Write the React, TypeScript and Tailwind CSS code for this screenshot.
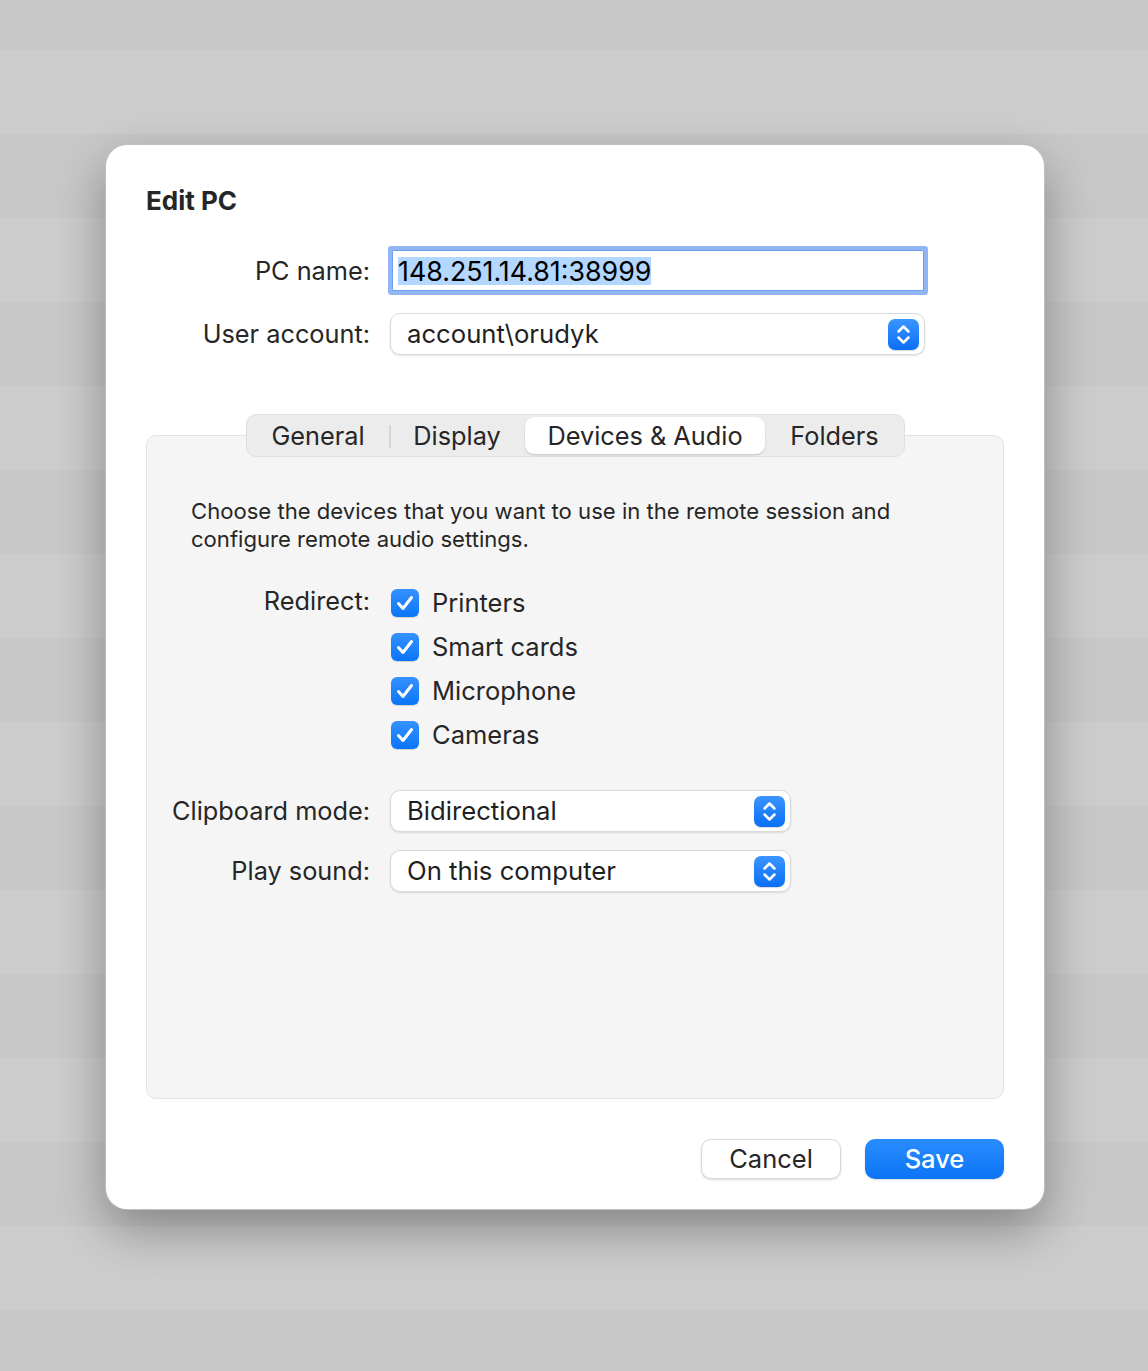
import type { ReactNode } from 'react'

function Stepper() {
  return (
    <div className="flex h-[31px] w-[31px] shrink-0 items-center justify-center rounded-[7px] bg-[linear-gradient(180deg,#3a95ff,#0a6ff5)] shadow-[0_1px_1px_rgba(0,0,0,0.15)]">
      <svg width="31" height="31" viewBox="0 0 31 31" fill="none">
        <path d="M10.5 12.5 L15.5 7.5 L20.5 12.5" stroke="white" strokeWidth="2.5" strokeLinecap="round" strokeLinejoin="round" />
        <path d="M10.5 18.5 L15.5 23.5 L20.5 18.5" stroke="white" strokeWidth="2.5" strokeLinecap="round" strokeLinejoin="round" />
      </svg>
    </div>
  )
}

function Popup({ value, width }: { value: string; width: string }) {
  return (
    <div
      className={`flex h-[42px] items-center justify-between rounded-[10px] border border-[#dadada] bg-white pl-[16px] pr-[5px] shadow-[0_1px_2px_rgba(0,0,0,0.12)] ${width}`}
    >
      <span className="text-[25.7px] leading-none text-[#1f1f1f]">{value}</span>
      <Stepper />
    </div>
  )
}

function Checkbox({ label }: { label: string }) {
  return (
    <div className="flex h-[44px] items-center gap-[13px]">
      <div className="flex h-[28px] w-[28px] items-center justify-center rounded-[6px] bg-[linear-gradient(180deg,#3592ff,#0a74f7)] shadow-[0_1px_1px_rgba(0,0,0,0.15)]">
        <svg width="28" height="28" viewBox="0 0 28 28" fill="none">
          <path d="M7.5 14.5 L12 19.5 L20.5 8.5" stroke="white" strokeWidth="3" strokeLinecap="round" strokeLinejoin="round" />
        </svg>
      </div>
      <span className="text-[25.5px] text-[#262626]">{label}</span>
    </div>
  )
}

function Row({ label, children, className = '' }: { label: string; children: ReactNode; className?: string }) {
  return (
    <div className={`flex items-center ${className}`}>
      <div className="w-[223px] text-right text-[25.3px] text-[#262626]">{label}</div>
      <div className="ml-[20px]">{children}</div>
    </div>
  )
}

const tabs = [
  { name: 'General', w: 'w-[142px]' },
  { name: 'Display', w: 'w-[136px]' },
  { name: 'Devices & Audio', w: 'w-[240px]', active: true },
  { name: 'Folders', w: 'w-[139px]' },
]

export default function App() {
  return (
    <div className="h-[1371px] w-full overflow-hidden bg-[linear-gradient(180deg,#cdcdcd_0px,#cdcdcd_84px,#c8c8c8_84px,#c8c8c8_168px)] bg-[size:100%_168px] bg-[position:0_50px] pt-[144px] pl-[105px] font-[Inter,'Noto_Sans',sans-serif] text-[#262626]">
      <div className="flex h-[1066px] w-[940px] flex-col rounded-[22px] border border-black/25 bg-white px-[40px] shadow-[0_20px_50px_rgba(0,0,0,0.33)]">
        <h1 className="mt-[40px] text-[26px] leading-[32px] font-bold text-[#262626]">Edit PC</h1>

        {/* PC name */}
        <div className="mt-[33px] flex items-center">
          <div className="w-[224px] text-right text-[25.3px] text-[#262626]">PC name:</div>
          <div className="ml-[22px] flex h-[41px] w-[532px] items-center rounded-[1px] border border-[#6f9ff0] bg-white pl-[5px] shadow-[0_0_0_4px_#92b5f6]">
            <span className="bg-[#b3d7ff] text-[26.8px] leading-[28px] text-black">148.251.14.81:38999</span>
          </div>
        </div>

        {/* User account */}
        <div className="mt-[22px] flex items-center">
          <div className="w-[224px] text-right text-[25.3px] text-[#262626]">User account:</div>
          <div className="ml-[20px]">
            <Popup value="account\orudyk" width="w-[535px]" />
          </div>
        </div>

        {/* Tab panel */}
        <div className="mt-[80px] flex h-[664px] flex-col rounded-[10px] border border-[#e3e3e3] bg-[#f5f5f5]">
          <div className="-mt-[22px] flex justify-center pl-[1px]">
            <div className="flex h-[43px] items-center rounded-[10px] border border-[#e0e0e0] bg-[#ececec]">
              {tabs.map((t, i) => (
                <div key={t.name} className={`relative flex h-full items-center justify-center ${t.w}`}>
                  {t.active && (
                    <div className="absolute inset-x-0 inset-y-[2px] rounded-[9px] bg-white shadow-[0_1px_2px_rgba(0,0,0,0.18)]" />
                  )}
                  {i === 1 && <div className="absolute left-0 top-[10px] h-[23px] w-[2px] bg-[#d6d6d6]" />}
                  <span className="relative text-[25.3px] text-[#262626]">{t.name}</span>
                </div>
              ))}
            </div>
          </div>

          <p className="mt-[40px] pl-[44px] text-[22.1px] leading-[28px] whitespace-nowrap text-[#262626]">
            Choose the devices that you want to use in the remote session and
            <br />
            configure remote audio settings.
          </p>

          <div className="mt-[28px] flex items-start">
            <div className="w-[223px] pt-[1px] text-right text-[25.3px] text-[#262626]">Redirect:</div>
            <div className="ml-[21px] flex flex-col">
              <Checkbox label="Printers" />
              <Checkbox label="Smart cards" />
              <Checkbox label="Microphone" />
              <Checkbox label="Cameras" />
            </div>
          </div>

          <Row label="Clipboard mode:" className="mt-[33px]">
            <Popup value="Bidirectional" width="w-[401px]" />
          </Row>
          <Row label="Play sound:" className="mt-[18px]">
            <Popup value="On this computer" width="w-[401px]" />
          </Row>
        </div>

        <div className="mt-[40px] flex justify-end gap-[24px]">
          <button className="h-[40px] w-[140px] rounded-[10px] border border-[#d8d8d8] bg-white text-[25.5px] text-[#262626] shadow-[0_1px_2px_rgba(0,0,0,0.15)]">
            Cancel
          </button>
          <button className="h-[40px] w-[139px] rounded-[10px] bg-[linear-gradient(180deg,#2a8cff,#0b74f6)] text-[25.5px] font-medium text-white shadow-[0_1px_2px_rgba(0,0,0,0.15)]">
            Save
          </button>
        </div>
      </div>
    </div>
  )
}
